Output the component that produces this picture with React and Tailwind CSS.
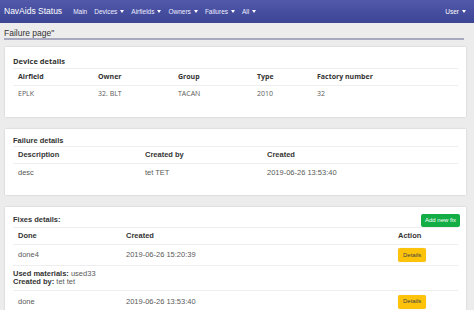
const navItems = [
  { label: "Main" },
  { label: "Devices", menu: true },
  { label: "Airfields", menu: true },
  { label: "Owners", menu: true },
  { label: "Failures", menu: true },
  { label: "All", menu: true },
];

function Caret() {
  return <span className="ml-[3px] inline-block border-x-[2.5px] border-t-[3px] border-x-transparent border-t-white align-middle" />;
}

function Card({ title, action, children, className = "", head = "h-[14px]" }) {
  return (
    <div className={"bg-white shadow-[0_0_2px_rgba(0,0,0,0.15)] px-[8px] " + className}>
      <div className={"flex items-center justify-between " + head}>
        <span className="font-bold text-[7.5px] text-[#333]">{title}</span>
        {action}
      </div>
      {children}
    </div>
  );
}

function Details() {
  return (
    <button className="bg-[#fdc30a] text-[#444] text-[6px] rounded-[2px] px-[5px] h-[14px] shadow-[0_0_1px_rgba(0,0,0,0.2)]">
      Details
    </button>
  );
}

export default function App() {
  return (
    <div className="w-[474px] h-[310px] overflow-hidden bg-[#ececec] font-['Liberation_Sans',Arial,sans-serif] text-[#5a5a5a]">
      <nav className="h-[23px] flex items-center justify-between px-[4px] bg-gradient-to-b from-[#5259ab] to-[#3c4494] text-white">
        <div className="flex items-center">
          <span className="text-[8.5px] mr-[11px]">NavAids Status</span>
          <ul className="flex gap-[7px] text-[6.5px] text-[#eef]">
            {navItems.map((n) => (
              <li key={n.label} className="flex items-center">
                {n.label}
                {n.menu && <Caret />}
              </li>
            ))}
          </ul>
        </div>
        <span className="text-[6.5px] mr-[4px] flex items-center">
          User
          <Caret />
        </span>
      </nav>

      <div className="pl-[4px] pr-[8px]">
        <h1 className="text-[8.5px] text-[#333] pt-[3px] h-[15px] leading-[14px]">Failure page"</h1>
        <div className="h-[2px] bg-[#a8a8be] mr-[2px] mb-[7px]" />

        <div className="pl-[1px] flex flex-col gap-[12px]">
          <Card title="Device details" className="h-[70px] pt-[8px] font-['Open_Sans',sans-serif]" head="h-[13px]">
            <table className="w-full text-[7px]">
              <thead>
                <tr className="h-[17px] border-y border-[#eee] text-left text-[#333]">
                  <th className="pl-[5px] w-[85px] font-bold">Airfield</th>
                  <th className="w-[80px] font-bold">Owner</th>
                  <th className="w-[79px] font-bold">Group</th>
                  <th className="w-[60px] font-bold">Type</th>
                  <th className="font-bold">Factory number</th>
                </tr>
              </thead>
              <tbody>
                <tr className="h-[17px]">
                  <td className="pl-[5px]">EPLK</td>
                  <td>32. BLT</td>
                  <td>TACAN</td>
                  <td>2010</td>
                  <td>32</td>
                </tr>
              </tbody>
            </table>
          </Card>

          <Card title="Failure details" className="h-[66px] pt-[6px]" head="h-[11px]">
            <table className="w-full text-[7.5px]">
              <thead>
                <tr className="h-[17px] border-y border-[#eee] text-left text-[#333]">
                  <th className="pl-[5px] w-[132px] font-bold">Description</th>
                  <th className="w-[122px] font-bold">Created by</th>
                  <th className="font-bold">Created</th>
                </tr>
              </thead>
              <tbody>
                <tr className="h-[18px]">
                  <td className="pl-[5px]">desc</td>
                  <td>tet TET</td>
                  <td>2019-06-26 13:53:40</td>
                </tr>
              </tbody>
            </table>
          </Card>

          <Card
            title="Fixes details:"
            className="h-[110px] pt-[6px]"
            action={
              <button className="bg-[#13ad46] text-white text-[6px] rounded-[2px] px-[4px] h-[13px] mt-[1px] mr-[-2px]">
                Add new fix
              </button>
            }
          >
            <table className="w-full text-[7.5px]">
              <thead>
                <tr className="h-[17px] border-y border-[#eee] text-left text-[#333]">
                  <th className="pl-[5px] w-[113px] font-bold">Done</th>
                  <th className="font-bold">Created</th>
                  <th className="w-[60px] font-bold">Action</th>
                </tr>
              </thead>
              <tbody>
                <tr className="h-[21px] border-b border-[#eee]">
                  <td className="pl-[5px]">done4</td>
                  <td>2019-06-26 15:20:39</td>
                  <td><Details /></td>
                </tr>
                <tr className="h-[25px] border-b border-[#eee]">
                  <td colSpan={3} className="leading-[8px] text-[#333]">
                    <div><b>Used materials:</b> <span className="text-[#5a5a5a]">used33</span></div>
                    <div><b>Created by:</b> <span className="text-[#5a5a5a]">tet tet</span></div>
                  </td>
                </tr>
                <tr className="h-[22px]">
                  <td className="pl-[5px]">done</td>
                  <td>2019-06-26 13:53:40</td>
                  <td><Details /></td>
                </tr>
              </tbody>
            </table>
          </Card>
        </div>
      </div>
    </div>
  );
}
